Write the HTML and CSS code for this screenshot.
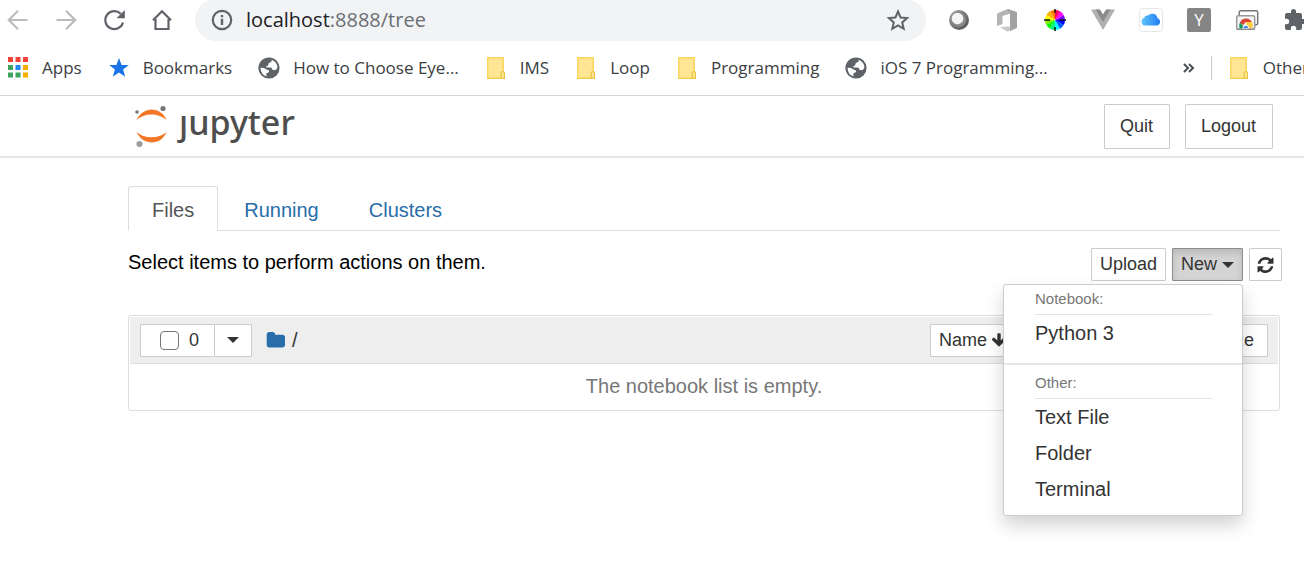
FILE: index.html
```
<!DOCTYPE html>
<html lang="en">
<head>
    <meta charset="UTF-8">
    <meta name="viewport" content="width=device-width, initial-scale=1.0">
    <title>Home Page - Select or create a notebook</title>
    <link rel="stylesheet" href="styles.css">
</head>
<body>
    <!-- shared symbols -->
    <svg class="symbols" aria-hidden="true">
        <symbol id="globe" viewBox="0 0 24 24">
            <circle cx="12" cy="12" r="10.6" fill="#5f6368"/>
            <path fill="#fff" d="M14.6 3.700q.6 1.700-.9 2.600-1.500.3-2.200 1.300.2 1.400-.8 2.200-1.700.2-1.700 1.500 2.600.3 5 .3 1.500 1 1.500 2.300 1.500.2 3.300.1 1.700-1.800 1.600-3.600-.8-4.700-5.800-6.700z"/>
            <path fill="#fff" d="M3.500 11.800q3.400-.2 5.300 1.300 1.800 1.200 3.300 1.300.3 1.600-1.300 2.400-1.500.2-1.700 1.500 0 1.500 1.300 2.300-6.600-1.100-6.900-8.800z"/>
        </symbol>
        <symbol id="bookmark-folder" viewBox="0 0 24 24">
            <path fill="#ffe694" stroke="#fbd65c" stroke-width="1.500" d="M3.800 1.800h15.400v20.400H3.800z"/>
            <path fill="#ffe694" stroke="#e9c23e" stroke-width="1.200" d="M17.200 22.300v-5.800q0-1 1.600-1t1.600 1v5.800z"/>
            <path stroke="#efc94a" d="M3 22.500h17"/>
        </symbol>
    </svg>

    <header class="browser">
        <div class="toolbar">
            <button class="icon-btn" aria-label="Back">
                <svg class="icon" viewBox="0 0 24 24"><path class="line faded" d="M21.500 12H3M12 2.800 2.800 12l9.200 9.200"/></svg>
            </button>
            <button class="icon-btn" aria-label="Forward">
                <svg class="icon" viewBox="0 0 24 24"><path class="line faded" d="M2.500 12H21M12 2.800l9.200 9.200-9.200 9.200"/></svg>
            </button>
            <button class="icon-btn" aria-label="Reload">
                <svg class="icon" viewBox="0 0 24 24"><path class="line" d="M21 14.500a9 9 0 1 1-2.300-8.700"/><path fill="#5f6368" d="M22.800 2v8.300h-8.300z"/></svg>
            </button>
            <button class="icon-btn" aria-label="Home">
                <svg class="icon" viewBox="0 0 24 24"><path class="line" d="M5.500 11v10h13V11M3 12.200l9-9 9 9"/></svg>
            </button>
            <div class="omnibox">
                <svg class="icon" viewBox="0 0 24 24"><circle class="line" cx="12" cy="12" r="9.200"/><path fill="#5f6368" d="M10.800 10.800h2.400V17h-2.400zM10.800 7h2.400v2.300h-2.400z"/></svg>
                <div class="url"><span class="host">localhost</span>:8888/tree</div>
                <button class="icon-btn" aria-label="Bookmark this page">
                    <svg class="icon" viewBox="0 0 24 24"><path fill="none" stroke="#5f6368" stroke-width="2" d="m12 3.500 2.600 6 6.500.6-4.900 4.300 1.500 6.400-5.700-3.400-5.700 3.400 1.500-6.400-4.900-4.300 6.500-.6z"/></svg>
                </button>
            </div>
            <div class="extensions">
                <svg class="icon" viewBox="0 0 24 24"><defs><linearGradient id="ring" x1="0" x2="1" y1="0" y2="1"><stop offset="0" stop-color="#a5a5a5"/><stop offset="1" stop-color="#4c4c4c"/></linearGradient></defs><circle cx="12" cy="12" r="10" fill="url(#ring)"/><circle cx="12" cy="12" r="7" fill="#8c8c8c"/><circle cx="10.500" cy="10.500" r="5.800" fill="#f4f4f4"/></svg>
                <svg class="icon" viewBox="0 0 24 24"><path fill="#b5b5b5" d="M2 5.500 12.500 1l3 1v3.500L7.500 8v8L2 18z"/><path fill="#a2a2a2" d="m12.500 1 9.500 3v16l-7 3V5z"/><path fill="#c9c9c9" d="m5 19 10-.5V23l-3 .5z"/></svg>
                <svg class="icon" viewBox="0 0 24 24">
                    <path fill="#ff8000" d="M12 12V2a10 10 0 0 0-5 1.340z"/>
                    <path fill="#ffb000" d="M12 12 7 3.340A10 10 0 0 0 3.340 7z"/>
                    <path fill="#ff0" d="M12 12 3.340 7A10 10 0 0 0 2 12z"/>
                    <path fill="#80f000" d="M12 12H2a10 10 0 0 0 1.340 5z"/>
                    <path fill="#0f0" d="m12 12-8.660 5A10 10 0 0 0 7 20.660z"/>
                    <path fill="#00f080" d="m12 12-5 8.660A10 10 0 0 0 12 22z"/>
                    <path fill="#0ff" d="M12 12v10a10 10 0 0 0 5-1.340z"/>
                    <path fill="#0060ff" d="m12 12 5 8.660A10 10 0 0 0 20.660 17z"/>
                    <path fill="#00f" d="m12 12 8.660 5A10 10 0 0 0 22 12z"/>
                    <path fill="#8000ff" d="M12 12h10a10 10 0 0 0-1.340-5z"/>
                    <path fill="#f0f" d="m12 12 8.660-5A10 10 0 0 0 17 3.340z"/>
                    <path fill="#ff0060" d="m12 12 5-8.660A10 10 0 0 0 12 2z"/>
                    <path stroke="#111" stroke-width="1.500" d="M12 1v4M12 19v4M1 12h6M17 12h6"/>
                </svg>
                <svg class="icon" viewBox="0 0 24 24"><path fill="#b0b0b0" d="M0 1.500h8L12 9l4-7.500h8L12 22z"/><path fill="#8a8a8a" d="M4.700 1.500H9l3 5 3-5h4.300L12 14z"/></svg>
                <svg class="icon" viewBox="0 0 24 24">
                    <defs><linearGradient id="cloud" x1="0" x2="1"><stop offset="0" stop-color="#62c4fb"/><stop offset="1" stop-color="#1f7df0"/></linearGradient></defs>
                    <rect x=".500" y=".500" width="23" height="23" rx="3" fill="#fff" stroke="#e6e6e6"/>
                    <path fill="url(#cloud)" d="M6 17.500a3.800 3.800 0 0 1-.8-7.400 3 3 0 0 1 3.700-2.500 5.500 5.500 0 0 1 9.600 2.600A3.800 3.800 0 0 1 18 17.500z"/>
                </svg>
                <span class="letter-ext">Y</span>
                <svg class="icon" viewBox="0 0 24 24">
                    <rect x="4.200" y="2.700" width="18.500" height="14" rx="1.500" fill="#fff" stroke="#777" stroke-width="1.500"/>
                    <rect x="1.700" y="7.700" width="18" height="13.500" rx="1.500" fill="#f4f4f4" stroke="#999" stroke-width="1.500"/>
                    <path fill="#db4437" d="M4.800 15a6.500 6.500 0 0 1 12-1h-6l-2.500 3z"/>
                    <path fill="#0f9d58" d="M5 14.500a6.500 6.500 0 0 0-.5 6h6z"/>
                    <path fill="#ffcd40" d="M11 14h5.800a6.500 6.500 0 0 1 .2 6.500h-5z"/>
                    <path fill="#4285f4" stroke="#fff" stroke-width="1" d="M7.700 20.500a3.100 3.100 0 1 1 6.200 0z"/>
                    <path stroke="#8d8d8d" stroke-width="1.500" d="M1.500 21.300h18"/>
                </svg>
                <svg class="icon" viewBox="0 0 24 24"><path fill="#5f6368" d="M20.500 11H19V7a2 2 0 0 0-2-2h-4V3.500a2.500 2.500 0 0 0-5 0V5H4a2 2 0 0 0-2 2v3.800h1.500a2.700 2.700 0 0 1 0 5.400H2V20c0 1.100.9 2 2 2h3.800v-1.500a2.700 2.700 0 0 1 5.400 0V22H17a2 2 0 0 0 2-2v-4h1.500a2.500 2.500 0 0 0 0-5z"/></svg>
            </div>
        </div>

        <nav class="bookmarks">
            <a href="#">
                <svg class="icon" viewBox="0 0 24 24">
                    <path fill="#f44336" d="M2 1h5v5H2zM9.500 1h5v5h-5zM17 1h5v5h-5z"/>
                    <path fill="#3da35d" d="M2 9h5v5H2zM2 16.500h5v5H2zM9.500 16.500h5v5h-5z"/>
                    <path fill="#1e88f5" d="M9.500 9h5v5h-5z"/>
                    <path fill="#f9ab00" d="M17 9h5v5h-5zM17 16.500h5v5h-5z"/>
                </svg>
                Apps
            </a>
            <a href="#">
                <svg class="icon" viewBox="0 0 24 24"><path fill="#1a73e8" d="m12 2 2.600 7h7.200l-5.700 4.500 2.100 7.200-6.200-4.300-6.200 4.300 2.100-7.200L2.200 9h7.200z"/></svg>
                Bookmarks
            </a>
            <a href="#"><svg class="icon"><use href="#globe"/></svg>How to Choose Eye...</a>
            <a href="#"><svg class="icon"><use href="#bookmark-folder"/></svg>IMS</a>
            <a href="#"><svg class="icon"><use href="#bookmark-folder"/></svg>Loop</a>
            <a href="#"><svg class="icon"><use href="#bookmark-folder"/></svg>Programming</a>
            <a href="#"><svg class="icon"><use href="#globe"/></svg>iOS 7 Programming...</a>
            <div class="more">
                <button class="icon-btn" aria-label="More bookmarks">
                    <svg class="icon" viewBox="0 0 24 24"><path fill="none" stroke="#4a4d51" stroke-width="2" d="m7 8 4 4-4 4M12 8l4 4-4 4"/></svg>
                </button>
                <a class="other" href="#"><svg class="icon"><use href="#bookmark-folder"/></svg>Other</a>
            </div>
        </nav>
    </header>

    <div class="header">
        <a class="logo" href="#">
            <svg viewBox="0 0 34 42" aria-hidden="true">
                <path fill="#f37726" d="M1.500 15C8 1 26 1 31.500 15 24 7.500 9 7.500 1.500 15zM1.500 27C8 41 26 41 31.500 27 24 34 9 34 1.500 27z"/>
                <circle cx="28" cy="3.500" r="2.600" fill="#767677"/>
                <circle cx="2" cy="7" r="1.800" fill="#767677"/>
                <circle cx="4.500" cy="39" r="3.100" fill="#9e9e9e"/>
            </svg>
            ȷupyter
        </a>
        <div class="session">
            <button class="btn btn-lg">Quit</button>
            <button class="btn btn-lg">Logout</button>
        </div>
    </div>

    <main class="site">
        <nav class="tabs">
            <a class="active" href="#">Files</a>
            <a href="#">Running</a>
            <a href="#">Clusters</a>
        </nav>

        <div class="list-toolbar">
            <div>Select items to perform actions on them.</div>
            <div class="actions">
                <button class="btn">Upload</button>
                <div class="dropdown">
                    <button class="btn open">New<span class="caret"></span></button>
                    <div class="menu">
                        <div class="menu-title">Notebook:</div>
                        <a href="#">Python 3</a>
                        <div class="divider"></div>
                        <div class="menu-title">Other:</div>
                        <a href="#">Text File</a>
                        <a href="#">Folder</a>
                        <a href="#">Terminal</a>
                    </div>
                </div>
                <button class="btn refresh" aria-label="Refresh">
                    <svg viewBox="0 0 1536 1536"><path fill="#333" d="M1511 928q0 5-1 7-64 268-268 434.500t-478 166.500q-146 0-282.500-55t-243.500-157l-129 129q-19 19-45 19t-45-19-19-45v-448q0-26 19-45t45-19h448q26 0 45 19t19 45-19 45l-137 137q71 66 161 102t187 36q134 0 250-65t186-179q11-17 53-117 8-23 30-23h192q13 0 22.500 9.500t9.500 22.500zm25-800v448q0 26-19 45t-45 19h-448q-26 0-45-19t-19-45 19-45l138-138q-148-137-349-137-134 0-250 65t-186 179q-11 17-53 117-8 23-30 23h-199q-13 0-22.500-9.500t-9.500-22.500v-7q65-268 270-434.500t480-166.500q146 0 284 55.500t245 156.500l130-129q19-19 45-19t45 19 19 45z"/></svg>
                </button>
            </div>
        </div>

        <div class="list">
            <div class="list-header">
                <div class="select-group">
                    <label class="btn"><input type="checkbox">0</label>
                    <button class="btn" aria-label="Select type"><span class="caret"></span></button>
                </div>
                <a class="crumb" href="#" aria-label="Home folder">
                    <svg viewBox="0 0 1728 1536"><path fill="#296eaa" d="M1728 480v704q0 92-66 158t-158 66h-1216q-92 0-158-66t-66-158v-960q0-92 66-158t158-66h320q92 0 158 66t66 158v32h672q92 0 158 66t66 158z"/></svg>
                </a>
                <span>/</span>
                <div class="sort">
                    <button class="btn">Name
                        <svg viewBox="0 0 1792 1792"><path fill="#333" d="M1675 832q0 53-37 90l-651 652q-39 37-91 37-53 0-90-37l-651-652q-38-36-38-90 0-53 38-91l74-75q39-37 91-37 53 0 90 37l294 294v-704q0-52 38-90t90-38h128q52 0 90 38t38 90v704l294-294q37-37 90-37 52 0 91 37l75 75q37 39 37 91z"/></svg>
                    </button>
                    <button class="btn size">File size</button>
                </div>
            </div>
            <div class="empty">The notebook list is empty.</div>
        </div>
    </main>
</body>
</html>
```
FILE: styles.css
```
* {
    box-sizing: border-box;
}
body {
    min-height: 100vh;
    margin: 0;
    background: #fff;
    color: #000;
    font-family: "Liberation Sans", Arial, sans-serif;
    font-size: 20px;
    line-height: 28px;
}
a {
    text-decoration: none;
    color: #296eaa;
}
.symbols {
    display: none;
}

/* browser chrome */
.browser {
    overflow: hidden;
    border-bottom: 1px solid #d5d6d9;
    font-family: "Open Sans", "Noto Sans", sans-serif;
}
.icon {
    display: block;
    flex: none;
    width: 24px;
    height: 24px;
}
.icon-btn {
    padding: 0;
    border: none;
    background: none;
}
.line {
    fill: none;
    stroke: #5f6368;
    stroke-width: 2.2;
}
.faded {
    stroke: #babcbe;
}
.toolbar {
    display: flex;
    align-items: center;
    gap: 24px;
    height: 41px;
    padding: 0 0 1px 6px;
}
.omnibox {
    flex: 1;
    display: flex;
    align-items: center;
    gap: 12px;
    height: 42px;
    margin: 0 -3px;
    padding: 0 16px 0 15px;
    border-radius: 21px;
    background: #f1f3f4;
}
.url {
    flex: 1;
    color: #6b6f74;
    font-size: 20px;
}
.host {
    color: #202124;
}
.extensions {
    display: flex;
    gap: 24px;
    margin-right: -3px;
}
.letter-ext {
    width: 24px;
    height: 24px;
    border-radius: 2px;
    background: #858585;
    color: #fff;
    font-size: 17px;
    line-height: 24px;
    text-align: center;
}
.bookmarks {
    display: flex;
    align-items: center;
    gap: 25px;
    height: 54px;
    padding-left: 6px;
    white-space: nowrap;
}
.bookmarks a {
    display: flex;
    align-items: center;
    gap: 12px;
    color: #3c4043;
    font-size: 17px;
}
.more {
    display: flex;
    align-items: center;
    gap: 10px;
    margin-left: auto;
    margin-right: -5px;
}
.bookmarks .other {
    height: 24px;
    padding-left: 15px;
    border-left: 1px solid #c8cacd;
}

/* notebook header */
.header {
    display: flex;
    align-items: center;
    justify-content: space-between;
    height: 62px;
    padding: 0 31px 0 135px;
    border-bottom: 2px solid #e7e7e7;
}
.logo {
    display: flex;
    gap: 10px;
    color: #4e4e4e;
    font-family: "Noto Sans", sans-serif;
    font-size: 34px;
    font-weight: 500;
    line-height: 34px;
}
.logo svg {
    width: 34px;
    height: 42px;
}
.session {
    display: flex;
    gap: 15px;
}
.btn {
    display: flex;
    align-items: center;
    height: 33px;
    padding: 0 8px;
    border: 1px solid #ccc;
    border-radius: 1px;
    background: #fff;
    color: #333;
    font-family: inherit;
    font-size: 18px;
    white-space: nowrap;
}
.btn-lg {
    height: 45px;
    padding: 0 16px 0 15px;
}

/* file browser */
.site {
    margin: 28px 24px 0 128px;
}
.tabs {
    display: flex;
    gap: 2px;
    border-bottom: 1px solid #ddd;
}
.tabs a {
    height: 45px;
    margin-bottom: -1px;
    padding: 9px 23px;
    border: 1px solid transparent;
    border-radius: 3px 3px 0 0;
}
.tabs .active {
    border-color: #ddd #ddd #fff;
    background: #fff;
    color: #555;
}
.list-toolbar {
    display: flex;
    justify-content: space-between;
    margin: 17px -2px 34px 0;
}
.actions {
    display: flex;
    gap: 6px;
}
.dropdown {
    position: relative;
}
.open {
    border-color: #8c8c8c;
    background: #d4d4d4;
    box-shadow: inset 0 4px 7px rgba(0, 0, 0, 0.125);
}
.caret {
    border: 6px solid transparent;
    border-top-color: #333;
    border-bottom: none;
}
.open .caret {
    margin-left: 5px;
}
.refresh {
    padding: 0 7px;
}
.refresh svg {
    width: 17px;
    height: 16px;
}
.menu {
    position: absolute;
    top: 36px;
    right: 0;
    width: 240px;
    padding-bottom: 8px;
    border: 1px solid #ccc;
    border-radius: 3px;
    background: #fff;
    box-shadow: 0 9px 18px rgba(0, 0, 0, 0.175);
}
.menu a {
    display: block;
    padding: 0 31px;
    color: #333;
    line-height: 36px;
}
.menu-title {
    margin: 0 30px 0 31px;
    padding-bottom: 2px;
    border-bottom: 1px solid #e5e5e5;
    color: #777;
    font-size: 15px;
    line-height: 27px;
}
.divider {
    height: 2px;
    margin: 12px 0 4px;
    background: #e5e5e5;
}
.list {
    padding: 1px;
    border: 1px solid #ddd;
    border-radius: 3px;
}
.list-header {
    display: flex;
    align-items: center;
    height: 47px;
    padding: 0 10px;
    border-bottom: 1px solid #ddd;
    background: #eee;
    color: #333;
}
.select-group {
    display: flex;
}
.select-group .btn {
    padding: 0 12px;
}
.select-group label.btn {
    gap: 10px;
    padding: 0 15px 0 19px;
    border-right: none;
}
.select-group input {
    appearance: none;
    width: 19px;
    height: 19px;
    margin: 0;
    border: 1px solid #767676;
    border-radius: 4px;
    background: #fff;
}
.crumb {
    margin: 0 7px 0 14px;
}
.crumb svg {
    display: block;
    width: 19px;
    height: 17px;
}
.sort {
    display: flex;
    justify-content: space-between;
    width: 338px;
    margin-left: auto;
}
.sort svg {
    width: 16px;
    height: 18px;
    margin-left: 4px;
}
.sort .size {
    padding-right: 13px;
}
.empty {
    color: #777;
    line-height: 45px;
    text-align: center;
}
```
